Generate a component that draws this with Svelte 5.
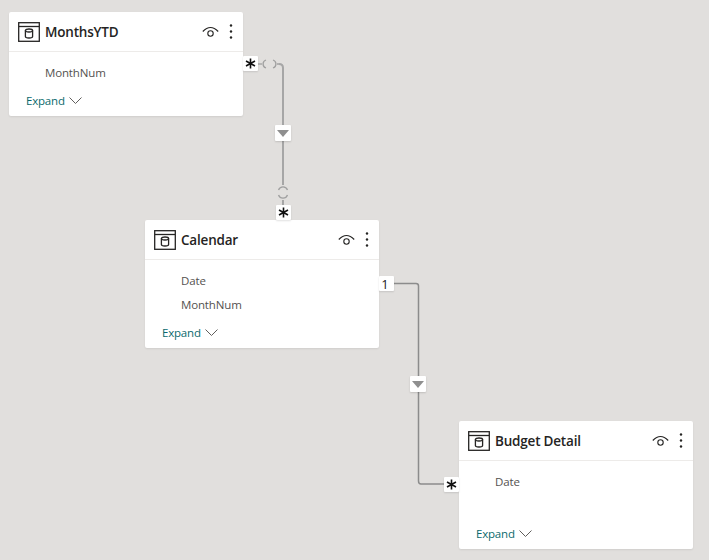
<script>
	// diagram nodes, placed on the canvas
	const tables = [
		{ name: 'MonthsYTD', x: 9, y: 12, h: 104, fields: ['MonthNum'] },
		{ name: 'Calendar', x: 145, y: 220, h: 128, fields: ['Date', 'MonthNum'] },
		{ name: 'Budget Detail', x: 459, y: 421, h: 128, fields: ['Date'] }
	]

	const badges = [
		{ x: 243, y: 56, label: '*' },
		{ x: 276, y: 205, label: '*' },
		{ x: 379, y: 276, label: '1' },
		{ x: 444, y: 477, label: '*' }
	]

	const arrows = [
		{ x: 275, y: 125 },
		{ x: 410, y: 376 }
	]
</script>

<div class="canvas">
	<svg class="lines" width="709" height="560" viewBox="0 0 709 560" fill="none">
		<g stroke="#a6a6a6" stroke-width="2">
			<path d="M283 125V68Q283 64 279 64" />
			<path d="M283 140V185" />
			<path d="M283 200V205" />
		</g>
		<g stroke="#a0a0a0" stroke-width="1.300">
			<path d="M258 64H262" />
			<path d="M279 64H277" />
			<path d="M266 60A4.200 4.200 0 0 0 266 68" />
			<path d="M273 60A4.200 4.200 0 0 1 273 68" />
			<path d="M278.500 190A4.800 4.800 0 0 1 287.500 190" />
			<path d="M278.500 195A4.800 4.800 0 0 0 287.500 195" />
		</g>
		<g stroke="#8c8c8c" stroke-width="1.500">
			<path d="M393 283.500H416Q418.500 283.500 418.500 286V376" />
			<path d="M418.500 391V481Q418.500 484 421 484H444" />
		</g>
	</svg>

	{#each tables as t}
		<section class="table" style="left:{t.x}px;top:{t.y}px;height:{t.h}px">
			<header>
				<svg class="tbl-icon" width="22" height="20" viewBox="0 0 22 20" fill="none" stroke="#252423" stroke-width="1.300">
					<rect x="0.700" y="0.700" width="20.600" height="18.600" />
					<path d="M1 4.500H21" />
					<ellipse cx="11" cy="8.500" rx="3.600" ry="1.500" />
					<path d="M7.400 8.500V14.500Q7.400 16 11 16T14.600 14.500V8.500" />
				</svg>
				<h2>{t.name}</h2>
				<svg class="eye" width="17" height="12" viewBox="0 0 17 12" fill="none" stroke="#252423" stroke-width="1.100">
					<path d="M0.800 5.500Q8.500 -2.500 16.200 5.500" />
					<circle cx="8.500" cy="7.500" r="2.700" />
				</svg>
				<svg class="more" width="4" height="15" viewBox="0 0 4 15" fill="#252423">
					<circle cx="2" cy="1.500" r="1.200" />
					<circle cx="2" cy="7.500" r="1.200" />
					<circle cx="2" cy="13.500" r="1.200" />
				</svg>
			</header>
			<ul>
				{#each t.fields as f}
					<li>{f}</li>
				{/each}
			</ul>
			<div class="expand">
				Expand
				<svg width="13" height="7" viewBox="0 0 13 7" fill="none" stroke="#605e5c" stroke-width="1">
					<path d="M0.500 0.500L6.500 6.500L12.500 0.500" />
				</svg>
			</div>
		</section>
	{/each}

	{#each badges as b}
		<div class="badge" style="left:{b.x}px;top:{b.y}px">
			{#if b.label === '*'}
				<svg width="11" height="11" viewBox="0 0 11 11" stroke="#111" stroke-width="1.600">
					<path d="M5.500 0.500V10.500M1 3L10 8M10 3L1 8" />
				</svg>
			{:else}
				<span class="one">{b.label}</span>
			{/if}
		</div>
	{/each}

	{#each arrows as a}
		<div class="arrow" style="left:{a.x}px;top:{a.y}px">
			<svg width="12" height="7" viewBox="0 0 12 7" fill="#8f8f8f"><path d="M0 0H12L6 7Z" /></svg>
		</div>
	{/each}
</div>

<style>
	:global(body) {
		margin: 0;
		background: #e1dfdd;
	}

	.canvas {
		position: relative;
		width: 709px;
		height: 560px;
		overflow: hidden;
		background: #e1dfdd;
		font-family: "Open Sans", "Noto Sans", sans-serif;
	}

	.lines {
		position: absolute;
		left: 0;
		top: 0;
	}

	.table {
		position: absolute;
		width: 234px;
		display: flex;
		flex-direction: column;
		background: #fff;
		border-radius: 2px;
		box-shadow: 0 1px 2px rgba(0, 0, 0, 0.08);
	}

	header {
		flex: none;
		display: flex;
		align-items: center;
		padding: 0 10px 0 9px;
		border-bottom: 1px solid #edebe9;
		box-sizing: border-box;
		height: 40px;
	}

	.tbl-icon {
		flex: none;
		margin-right: 5px;
	}

	h2 {
		margin: 0;
		flex: 1;
		font-size: 13.500px;
		font-weight: 600;
		color: #252423;
		letter-spacing: -0.2px;
	}

	.eye {
		margin-right: 10px;
		margin-top: 1px;
	}

	ul {
		list-style: none;
		margin: 0;
		padding: 9px 0 0 36px;
		flex: 1;
	}

	li {
		height: 24px;
		line-height: 24px;
		font-size: 11.500px;
		color: #54524f;
		letter-spacing: -0.15px;
	}

	.expand {
		display: flex;
		align-items: center;
		gap: 4px;
		height: 16px;
		margin: 0 0 8px 17px;
		font-size: 11.500px;
		color: #0b6a6d;
		letter-spacing: -0.2px;
	}

	.badge {
		position: absolute;
		width: 15px;
		height: 15px;
		display: flex;
		align-items: center;
		justify-content: center;
		background: #fff;
		border-radius: 1px;
		font-size: 13px;
		color: #1b1a19;
		box-shadow: 0 1px 2px rgba(0, 0, 0, 0.12);
	}

	.one {
		padding-right: 3px;
	}

	.arrow {
		position: absolute;
		width: 16px;
		height: 16px;
		display: flex;
		align-items: center;
		justify-content: center;
		background: #fff;
		border-radius: 1px;
		box-shadow: 0 1px 2px rgba(0, 0, 0, 0.15);
	}
</style>
